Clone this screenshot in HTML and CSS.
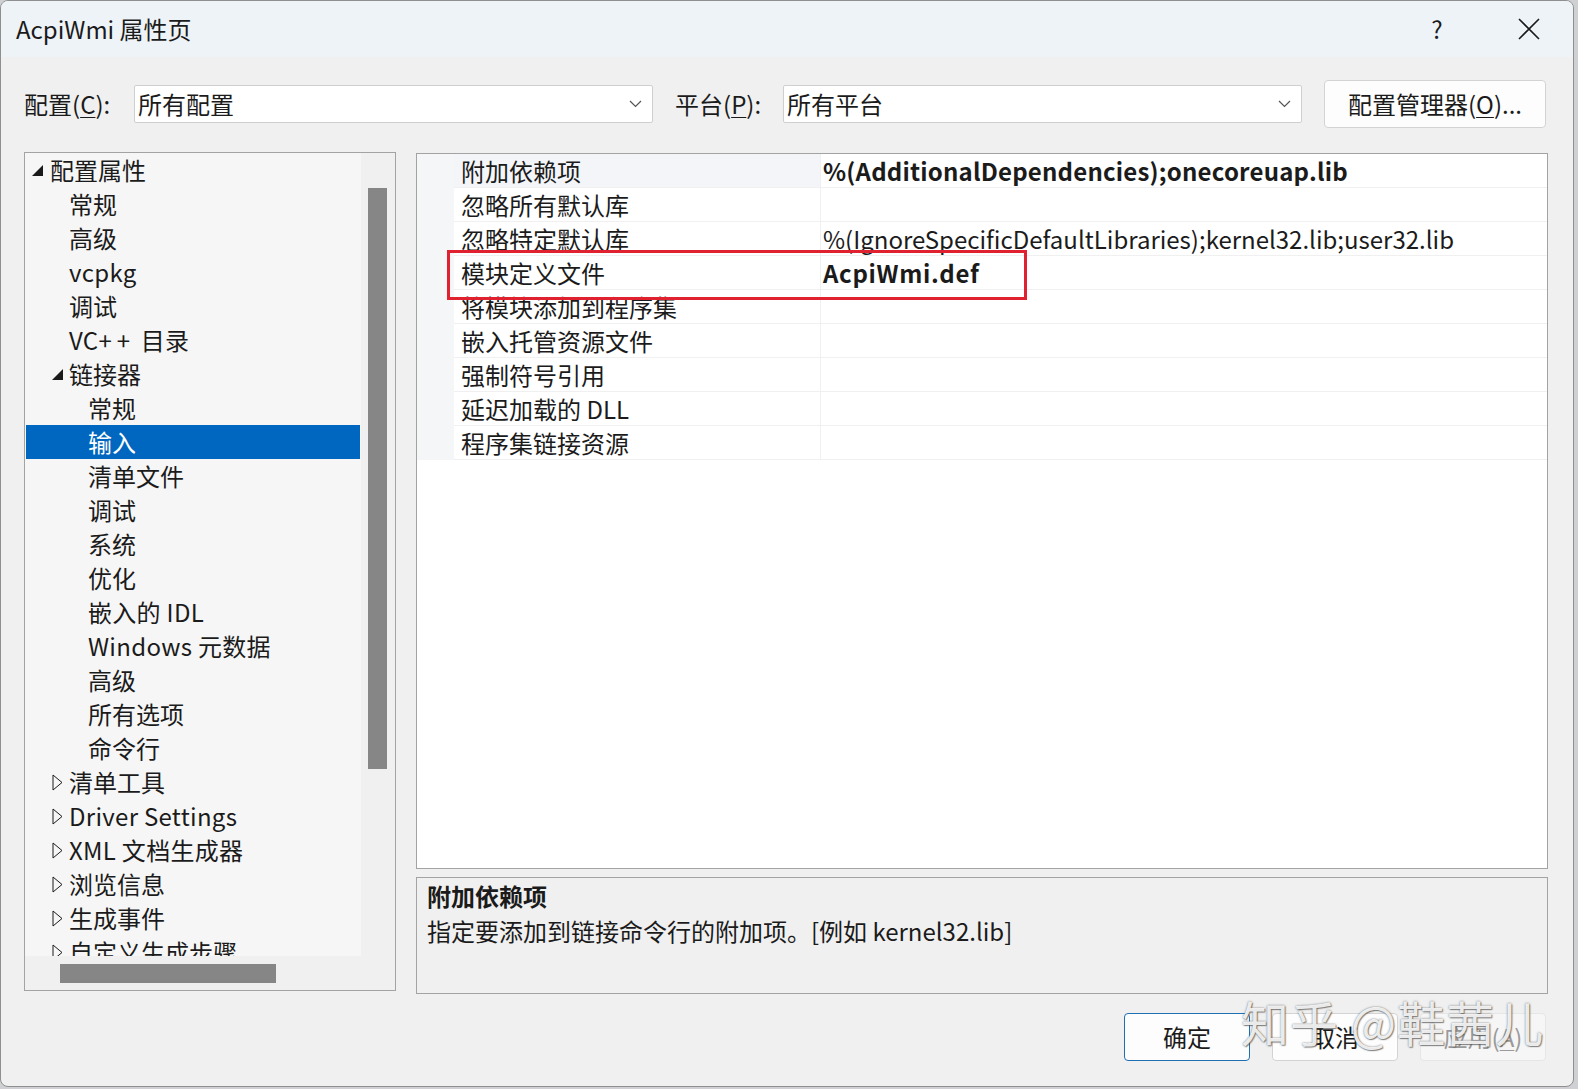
FILE: index.html
```html
<!DOCTYPE html>
<html lang="zh-CN">
<head>
<meta charset="utf-8">
<title>AcpiWmi 属性页</title>
<link rel="stylesheet" href="styles.css">
</head>
<body>
<div class="window">
  <div class="titlebar">
    <span class="title">AcpiWmi 属性页</span>
    <span class="help">?</span>
    <span class="close">
      <svg width="22" height="22" viewBox="0 0 22 22"><path d="M1 1 L21 21 M21 1 L1 21" stroke="#1a1a1a" stroke-width="1.6" fill="none"/></svg>
    </span>
  </div>
  <div class="body">
    <div class="config-row">
      <span class="cfg-label">配置(<u>C</u>):</span>
      <div class="combo"><span>所有配置</span><svg class="chev" width="13" height="8" viewBox="0 0 13 8"><path d="M1 1 L6.5 6.5 L12 1" stroke="#555" stroke-width="1.2" fill="none"/></svg></div>
      <span class="cfg-label second">平台(<u>P</u>):</span>
      <div class="combo"><span>所有平台</span><svg class="chev" width="13" height="8" viewBox="0 0 13 8"><path d="M1 1 L6.5 6.5 L12 1" stroke="#555" stroke-width="1.2" fill="none"/></svg></div>
      <button class="btn cfg-mgr">配置管理器(<u>O</u>)...</button>
    </div>
    <div class="main">
      <div class="tree">
        <div class="tree-view">
          <div class="row l0"><svg class="exp" width="11" height="11" viewBox="0 0 11 11"><path d="M11 0 L11 11 L0 11 Z" fill="#1a1a1a"/></svg>配置属性</div>
          <div class="row l1">常规</div>
          <div class="row l1">高级</div>
          <div class="row l1 latin">vcpkg</div>
          <div class="row l1">调试</div>
          <div class="row l1 latin"><span>VC<span class="plus">++</span> 目录</span></div>
          <div class="row l1"><svg class="exp" width="11" height="11" viewBox="0 0 11 11"><path d="M11 0 L11 11 L0 11 Z" fill="#1a1a1a"/></svg>链接器</div>
          <div class="row l2">常规</div>
          <div class="row l2 selected">输入</div>
          <div class="row l2">清单文件</div>
          <div class="row l2">调试</div>
          <div class="row l2">系统</div>
          <div class="row l2">优化</div>
          <div class="row l2 latin">嵌入的 IDL</div>
          <div class="row l2 latin">Windows 元数据</div>
          <div class="row l2">高级</div>
          <div class="row l2">所有选项</div>
          <div class="row l2">命令行</div>
          <div class="row l1"><svg class="col" width="11" height="17" viewBox="0 0 11 17"><path d="M1 1 L10 8.5 L1 16 Z" fill="none" stroke="#1a1a1a" stroke-width="1"/></svg>清单工具</div>
          <div class="row l1 latin"><svg class="col" width="11" height="17" viewBox="0 0 11 17"><path d="M1 1 L10 8.5 L1 16 Z" fill="none" stroke="#1a1a1a" stroke-width="1"/></svg>Driver Settings</div>
          <div class="row l1 latin"><svg class="col" width="11" height="17" viewBox="0 0 11 17"><path d="M1 1 L10 8.5 L1 16 Z" fill="none" stroke="#1a1a1a" stroke-width="1"/></svg>XML 文档生成器</div>
          <div class="row l1"><svg class="col" width="11" height="17" viewBox="0 0 11 17"><path d="M1 1 L10 8.5 L1 16 Z" fill="none" stroke="#1a1a1a" stroke-width="1"/></svg>浏览信息</div>
          <div class="row l1"><svg class="col" width="11" height="17" viewBox="0 0 11 17"><path d="M1 1 L10 8.5 L1 16 Z" fill="none" stroke="#1a1a1a" stroke-width="1"/></svg>生成事件</div>
          <div class="row l1"><svg class="col" width="11" height="17" viewBox="0 0 11 17"><path d="M1 1 L10 8.5 L1 16 Z" fill="none" stroke="#1a1a1a" stroke-width="1"/></svg>自定义生成步骤</div>
        </div>
        <div class="vscroll"><div class="vthumb"></div></div>
        <div class="hscroll"><div class="hthumb"></div></div>
        <div class="corner"></div>
      </div>
      <div class="right-col">
        <div class="grid">
          <div class="grow first"><div class="gut"></div><div class="name">附加依赖项</div><div class="val bold">%(AdditionalDependencies);onecoreuap.lib</div></div>
          <div class="grow"><div class="gut"></div><div class="name">忽略所有默认库</div><div class="val"></div></div>
          <div class="grow"><div class="gut"></div><div class="name">忽略特定默认库</div><div class="val">%(IgnoreSpecificDefaultLibraries);kernel32.lib;user32.lib</div></div>
          <div class="grow"><div class="gut"></div><div class="name">模块定义文件</div><div class="val bold wide">AcpiWmi.def</div></div>
          <div class="grow"><div class="gut"></div><div class="name">将模块添加到程序集</div><div class="val"></div></div>
          <div class="grow"><div class="gut"></div><div class="name">嵌入托管资源文件</div><div class="val"></div></div>
          <div class="grow"><div class="gut"></div><div class="name">强制符号引用</div><div class="val"></div></div>
          <div class="grow"><div class="gut"></div><div class="name">延迟加载的 DLL</div><div class="val"></div></div>
          <div class="grow"><div class="gut"></div><div class="name">程序集链接资源</div><div class="val"></div></div>
          <div class="highlight"></div>
        </div>
        <div class="desc">
          <div class="desc-title">附加依赖项</div>
          <div class="desc-text">指定要添加到链接命令行的附加项。[例如 kernel32.lib]</div>
        </div>
      </div>
    </div>
    <div class="buttons">
      <button class="btn dlg default">确定</button>
      <button class="btn dlg">取消</button>
      <button class="btn dlg disabled">应用(<u>A</u>)</button>
    </div>
  </div>
  <div class="watermark">知乎 @鞋茜儿</div>
</div>
</body>
</html>
```
FILE: styles.css
```css
html, body {
  margin: 0;
  padding: 0;
  background: #cfd0d4;
}
body {
  font-family: "Noto Sans CJK SC", "Noto Sans", sans-serif;
  color: #1b1b1b;
  font-size: 24px;
}
u {
  text-decoration: underline;
  text-underline-offset: 3px;
  text-decoration-thickness: 1px;
}
.window {
  width: 1574px;
  height: 1087px;
  box-sizing: border-box;
  border: 1px solid #8f8f8f;
  border-radius: 8px;
  background: #f0f0f0;
  overflow: hidden;
  position: relative;
}
.titlebar {
  height: 56px;
  background: #eef3f8;
  display: flex;
  align-items: center;
  padding-left: 15px;
}
.title {
  flex: 1;
  font-size: 24px;
  line-height: 30px;
}
.help {
  font-size: 24px;
  line-height: 30px;
  width: 20px;
  text-align: center;
  margin-right: 71px;
}
.close {
  width: 22px;
  height: 22px;
  margin-right: 33px;
  display: flex;
}
.body {
  padding: 23px 25px 0 23px;
}
.config-row {
  display: flex;
  align-items: center;
  height: 48px;
}
.cfg-label {
  width: 110px;
  line-height: 34px;
}
.cfg-label.second {
  width: 108px;
  margin-left: 22px;
}
.combo {
  width: 519px;
  height: 38px;
  box-sizing: border-box;
  background: #fff;
  border: 1px solid #cfcfcf;
  border-radius: 2px;
  display: flex;
  align-items: center;
  padding-left: 3px;
  padding-right: 10px;
}
.combo span {
  flex: 1;
  line-height: 34px;
}
.btn {
  font-family: inherit;
  font-size: 24px;
  color: #1b1b1b;
  background: #fdfdfd;
  border: 1px solid #d3d3d3;
  border-radius: 4px;
  height: 48px;
  padding: 0;
  line-height: 34px;
}
.cfg-mgr {
  width: 222px;
  margin-left: 22px;
}
.main {
  display: flex;
  gap: 20px;
  margin-top: 24px;
}
.tree {
  width: 372px;
  height: 839px;
  box-sizing: border-box;
  border: 1px solid #a3a3a3;
  background: #f0f0f0;
  display: grid;
  grid-template-columns: 336px 34px;
  grid-template-rows: 803px 34px;
}
.tree-view {
  background: #f6f6f6;
  overflow: hidden;
}
.row {
  height: 34px;
  line-height: 34px;
  white-space: nowrap;
  display: flex;
  align-items: center;
  margin-right: 1px;
  margin-left: 1px;
}
.row.latin {
  letter-spacing: 0.3px;
}
.plus {
  letter-spacing: 5px;
}
.row.l0 { padding-left: 6px; }
.row.l1 { padding-left: 43px; }
.row.l2 { padding-left: 62px; }
.row .exp {
  margin-right: 7px;
}
.row.l1:has(.exp), .row.l1:has(.col) { padding-left: 25px; }
.row.l1 .exp { margin-right: 6px; margin-left: 1px; }
.row .col { margin-left: 1px; margin-right: 6px; }
.row.selected {
  background: #0067c0;
  color: #fff;
}
.vthumb {
  margin-top: 35px;
  margin-left: 7px;
  width: 19px;
  height: 581px;
  background: #868686;
}
.hthumb {
  margin-top: 8px;
  margin-left: 35px;
  width: 216px;
  height: 19px;
  background: #868686;
}
.right-col {
  width: 1132px;
  display: flex;
  flex-direction: column;
}
.grid {
  margin-top: 1px;
  height: 716px;
  box-sizing: border-box;
  border: 1px solid #a3a3a3;
  background: #fff;
  position: relative;
}
.grow {
  display: grid;
  grid-template-columns: 37px 366px 1fr;
  height: 34px;
}
.gut {
  background: #f5f6f8;
}
.name, .val {
  box-sizing: border-box;
  border-bottom: 1px solid #f0f0f0;
  line-height: 33px;
  white-space: nowrap;
  overflow: hidden;
}
.name {
  padding-left: 7px;
}
.val {
  padding-left: 2px;
  border-left: 1px solid #f0f0f0;
}
.grow.first .name {
  background: #f3f5f8;
}
.bold {
  font-weight: 700;
  letter-spacing: 0.2px;
}
.bold.wide {
  letter-spacing: 0.7px;
}
.highlight {
  position: absolute;
  left: 30px;
  top: 96px;
  width: 580px;
  height: 50px;
  box-sizing: border-box;
  border: 3px solid #e0212f;
}
.desc {
  margin-top: 8px;
  height: 117px;
  box-sizing: border-box;
  border: 1px solid #a3a3a3;
  background: #f0f0f0;
  padding: 0 10px;
  line-height: 35px;
}
.desc-title {
  font-weight: 700;
}
.buttons {
  display: flex;
  justify-content: flex-end;
  gap: 22px;
  margin-top: 19px;
  margin-right: 2px;
}
.dlg {
  width: 126px;
}
.dlg.default {
  border-color: #1f6fb3;
}
.dlg.disabled {
  color: #9a9a9a;
  background: #f6f6f6;
  border-color: #e6e6e6;
}
.watermark {
  position: absolute;
  left: 1240px;
  top: 988px;
  font-size: 48px;
  line-height: 64px;
  color: rgba(255, 255, 255, 0.88);
  text-shadow: 0 0 2px rgba(60, 60, 60, 0.7), 1px 1px 1px rgba(80, 80, 80, 0.6);
  white-space: nowrap;
  letter-spacing: 1px;
}
```
